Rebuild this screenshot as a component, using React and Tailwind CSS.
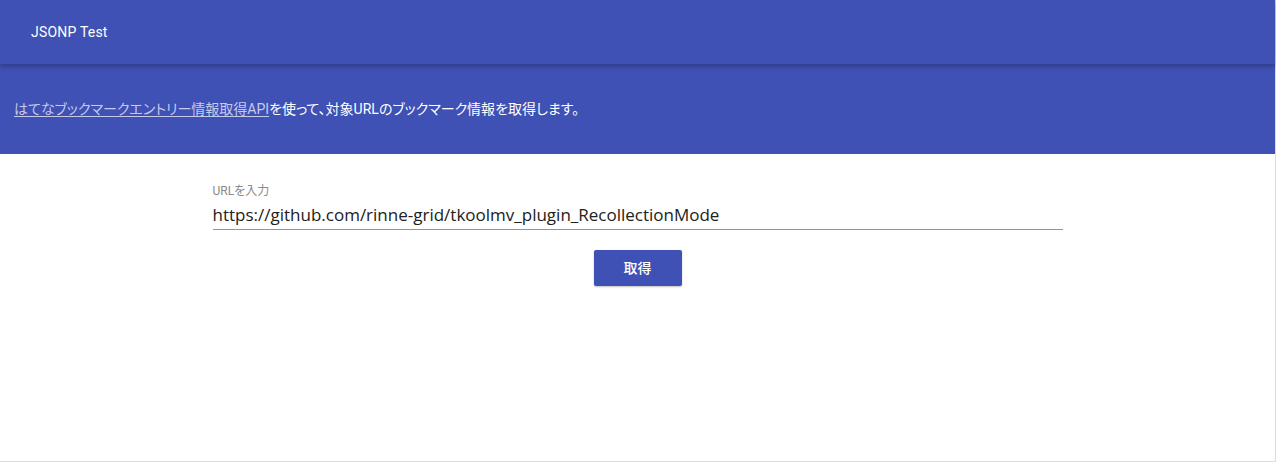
import React, { useState } from 'react';

export default function App() {
  const [url, setUrl] = useState(
    'https://github.com/rinne-grid/tkoolmv_plugin_RecollectionMode'
  );

  return (
    <div
      className="w-[1276px] h-[462px] bg-white overflow-hidden"
      style={{ fontFamily: 'Roboto, "Noto Sans CJK JP", sans-serif' }}
    >
      <div className="w-[1275px] h-[461px] border-r border-b border-[#dcdcdc] box-content flex flex-col">
        {/* toolbar */}
        <header className="relative z-10 h-[64px] bg-[#3f51b5] shadow-[0_2px_5px_rgba(0,0,0,0.3)] flex items-center px-[31px]">
          <h1 className="text-[14px] font-normal text-white tracking-[0.2px]">
            JSONP Test
          </h1>
        </header>

        {/* description band */}
        <div className="h-[90px] bg-[#3f51b5] flex items-center px-[14px]">
          <p
            className="text-[14px] text-white"
            style={{ fontFeatureSettings: '"palt"' }}
          >
            <a href="#" className="underline text-[#c5cae9] underline-offset-2">
              はてなブックマークエントリー情報取得API
            </a>
            を使って、対象URLのブックマーク情報を取得します。
          </p>
        </div>

        {/* form */}
        <div className="flex flex-col items-center pt-[30px]">
          <div className="w-[850px] flex flex-col">
            <label
              className="text-[12px] text-[#8a8a8a] leading-[14px]"
              style={{ fontFeatureSettings: '"palt"' }}
            >
              URLを入力
            </label>
            <input
              type="text"
              value={url}
              onChange={(e) => setUrl(e.target.value)}
              className="mt-[2px] h-[30px] text-[17px] text-[#212121] border-b border-[#949494] outline-none bg-transparent font-['Open_Sans',sans-serif]"
            />
          </div>
          <button className="mt-[20px] w-[88px] h-[36px] rounded-[2px] bg-[#3f51b5] text-white text-[14px] font-medium shadow-[0_1px_2px_rgba(0,0,0,0.25)]">
            取得
          </button>
        </div>
      </div>
    </div>
  );
}
